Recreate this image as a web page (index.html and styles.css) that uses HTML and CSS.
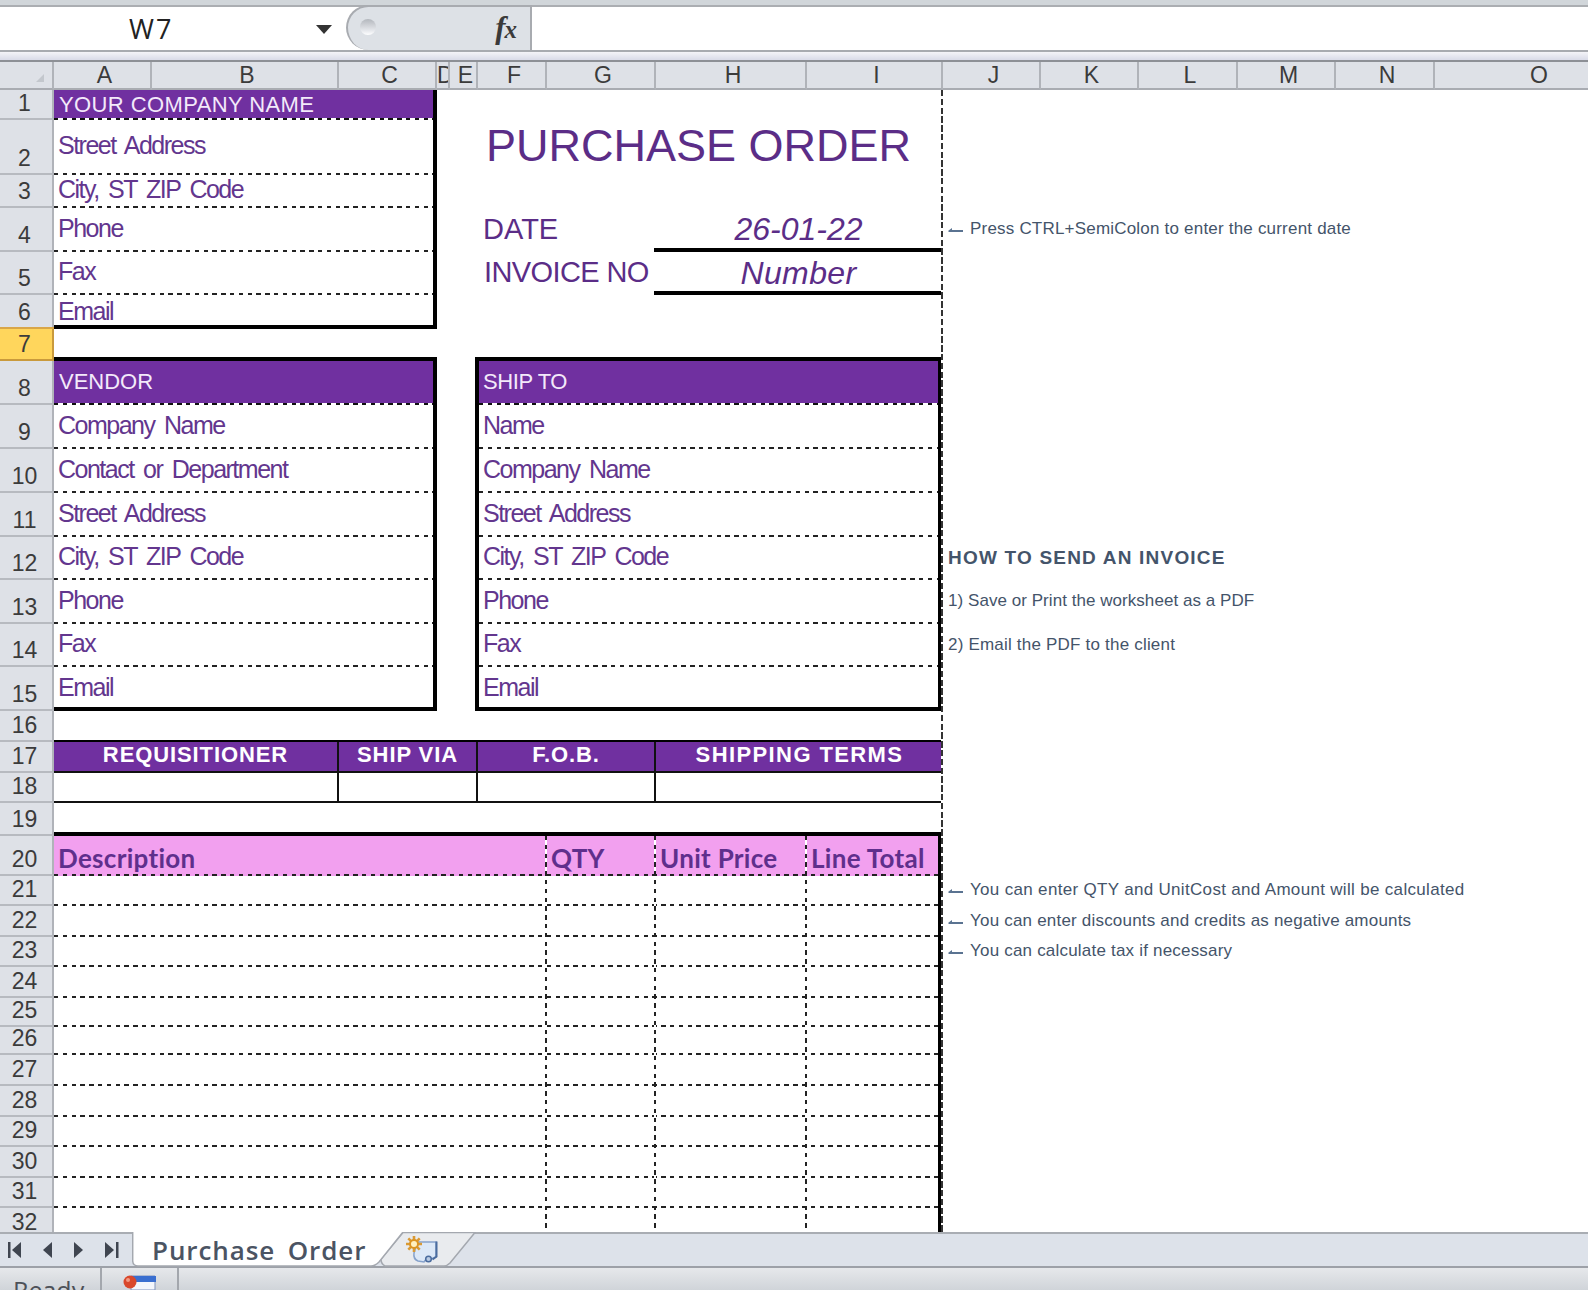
FILE: index.html
```html
<!DOCTYPE html>
<html lang="en">
<head>
    <meta charset="UTF-8">
    <meta name="viewport" content="width=device-width, initial-scale=1.0">
    <title>Purchase Order</title>
    <link rel="stylesheet" href="styles.css">
</head>
<body>
    <div class="formula-bar">
        <div class="name-box">
            <span class="cell-name">W7</span>
            <svg class="arrow" width="16" height="9" viewBox="0 0 16 9"><path d="M0 0h16L8 9z" fill="#333"/></svg>
        </div>
        <div class="fx-box">
            <span class="knob"></span>
            <span class="fx">f<small>x</small></span>
        </div>
        <div class="formula-input"></div>
    </div>
    <div class="divider"></div>

    <div class="sheet">
        <div class="col-head corner"><svg width="8" height="8" viewBox="0 0 8 8"><path d="M8 0v8H0z" fill="#c3c7cd"/></svg></div>
        <div class="col-head">A</div>
        <div class="col-head">B</div>
        <div class="col-head">C</div>
        <div class="col-head narrow">D</div>
        <div class="col-head">E</div>
        <div class="col-head">F</div>
        <div class="col-head">G</div>
        <div class="col-head">H</div>
        <div class="col-head">I</div>
        <div class="col-head">J</div>
        <div class="col-head">K</div>
        <div class="col-head">L</div>
        <div class="col-head">M</div>
        <div class="col-head">N</div>
        <div class="col-head last-col">O</div>

        <div class="row-heads">
            <div>1</div>
            <div>2</div>
            <div>3</div>
            <div>4</div>
            <div>5</div>
            <div>6</div>
            <div class="selected">7</div>
            <div>8</div>
            <div>9</div>
            <div>10</div>
            <div>11</div>
            <div>12</div>
            <div>13</div>
            <div>14</div>
            <div>15</div>
            <div>16</div>
            <div>17</div>
            <div>18</div>
            <div>19</div>
            <div>20</div>
            <div>21</div>
            <div>22</div>
            <div>23</div>
            <div>24</div>
            <div>25</div>
            <div>26</div>
            <div>27</div>
            <div>28</div>
            <div>29</div>
            <div>30</div>
            <div>31</div>
            <div>32</div>
        </div>

        <div class="block company">
            <div class="title wide">YOUR COMPANY NAME</div>
            <div>Street Address</div>
            <div>City, ST ZIP Code</div>
            <div>Phone</div>
            <div>Fax</div>
            <div class="low">Email</div>
        </div>

        <div class="heading">PURCHASE ORDER</div>
        <div class="label date-label">DATE</div>
        <div class="value date-value">26-01-22</div>
        <div class="label no-label">INVOICE NO</div>
        <div class="value no-value">Number</div>

        <div class="block vendor">
            <div class="title">VENDOR</div>
            <div>Company Name</div>
            <div>Contact or Department</div>
            <div>Street Address</div>
            <div>City, ST ZIP Code</div>
            <div>Phone</div>
            <div>Fax</div>
            <div>Email</div>
        </div>

        <div class="block ship-to">
            <div class="title tight">SHIP TO</div>
            <div>Name</div>
            <div>Company Name</div>
            <div>Street Address</div>
            <div>City, ST ZIP Code</div>
            <div>Phone</div>
            <div>Fax</div>
            <div>Email</div>
        </div>

        <div class="terms">
            <div class="th req">REQUISITIONER</div>
            <div class="th via">SHIP VIA</div>
            <div class="th fob">F.O.B.</div>
            <div class="th ship">SHIPPING TERMS</div>
            <div class="td req"></div>
            <div class="td via"></div>
            <div class="td fob"></div>
            <div class="td ship"></div>
        </div>

        <div class="items">
            <div class="item-head">
                <div class="desc">Description</div>
                <div>QTY</div>
                <div>Unit Price</div>
                <div>Line Total</div>
            </div>
            <div class="item-rows">
                <div class="item"></div>
                <div class="item"></div>
                <div class="item"></div>
                <div class="item"></div>
                <div class="item"></div>
                <div class="item"></div>
                <div class="item"></div>
                <div class="item"></div>
                <div class="item"></div>
                <div class="item"></div>
                <div class="item"></div>
            </div>
            <div class="rule rule-desc"></div>
            <div class="rule rule-qty"></div>
            <div class="rule rule-price"></div>
        </div>

        <div class="page-break"></div>

        <div class="note row4"><svg class="tip" width="15" height="6" viewBox="0 0 15 6"><path d="M0 4L4 1V3H15V5H1z" fill="#5a7391"/></svg><span class="n1">Press CTRL+SemiColon to enter the current date</span></div>
        <div class="note-title">HOW TO SEND AN INVOICE</div>
        <div class="note row13"><span class="n2">1) Save or Print the worksheet as a PDF</span></div>
        <div class="note row14"><span class="n3">2) Email the PDF to the client</span></div>
        <div class="note row21"><svg class="tip" width="15" height="6" viewBox="0 0 15 6"><path d="M0 4L4 1V3H15V5H1z" fill="#5a7391"/></svg><span class="n4">You can enter QTY and UnitCost and Amount will be calculated</span></div>
        <div class="note row22"><svg class="tip" width="15" height="6" viewBox="0 0 15 6"><path d="M0 4L4 1V3H15V5H1z" fill="#5a7391"/></svg><span class="n5">You can enter discounts and credits as negative amounts</span></div>
        <div class="note row23"><svg class="tip" width="15" height="6" viewBox="0 0 15 6"><path d="M0 4L4 1V3H15V5H1z" fill="#5a7391"/></svg><span class="n6">You can calculate tax if necessary</span></div>
    </div>

    <div class="tab-bar">
        <div class="nav">
            <svg width="132" height="34" viewBox="0 0 132 34" fill="#3f4550">
                <path d="M8 8h2.500v16H8zM21 8v16L12 16z"/>
                <path d="M52 8v16L43 16z"/>
                <path d="M74 8v16L83 16z"/>
                <path d="M105 8v16L114 16zM116 8h2.500v16H116z"/>
            </svg>
        </div>
        <div class="tab">
            <svg class="tab-shape" width="350" height="36" viewBox="0 0 350 36">
                <path d="M271 0.500H343L318 31q-3 3-6 3H253q-4-2-4-7z" fill="#e9ebee" stroke="#a4a8af" stroke-width="1.500"/>
                <path d="M0.700 0H271L247 30q-4 4-8 4H6q-5 0-5.300-5z" fill="#fff"/>
                <path d="M0.700 0V29q.3 5 5.300 5H239q4 0 8-4L271 0" fill="none" stroke="#a4a8af" stroke-width="1.500"/>
                <!-- insert sheet icon -->
                <path d="M285 10h19v15l-5 2q-5-1-7 3l-6-1q-5-2-4-8z" fill="#dce8f7" stroke="#86a2cb" stroke-width="1.500"/>
                <path d="M304.500 9.500v15l-4 3" fill="none" stroke="#4b6c9e" stroke-width="2"/>
                <circle cx="296.500" cy="27" r="2.800" fill="#b9cbe4" stroke="#4b6c9e" stroke-width="1.500"/>
                <path d="M282 4v16M274 12h16M276.300 6.300l11.400 11.400M287.700 6.300L276.300 17.700" stroke="#d99a35" stroke-width="2.600"/>
                <circle cx="282" cy="12" r="4" fill="#fff0c0" stroke="#dc9422" stroke-width="2"/>
            </svg>
            <span class="tab-name">Purchase Order</span>
        </div>
    </div>
    <div class="status-bar">
        <span class="ready">Ready</span>
        <div class="macro">
            <svg width="34" height="22" viewBox="0 0 34 22">
                <path d="M8 8h24v14H8z" fill="#f3f6fc" stroke="#7f93bd"/>
                <path d="M8 8h25v6H8z" fill="#3a6fd0"/>
                <circle cx="7" cy="14" r="6.500" fill="#d9482c"/>
                <circle cx="5" cy="12" r="2" fill="#f29a83"/>
            </svg>
        </div>
    </div>
</body>
</html>
```

FILE: styles.css
```css
* {
    box-sizing: border-box;
}
body {
    margin: 0;
    width: 1588px;
    height: 1290px;
    overflow: hidden;
    display: flex;
    flex-direction: column;
    background-color: #fff;
    font-family: "Liberation Sans", Arial, sans-serif;
}

/* formula bar */
.formula-bar {
    display: flex;
    height: 52px;
    flex: none;
    border-top: 5px solid #d1d6da;
    border-bottom: 2px solid #a8abb0;
    box-shadow: inset 0 2px 0 #abaeb2;
}
.name-box {
    width: 346px;
    display: flex;
    align-items: center;
    padding: 2px 14px 0 129px;
    justify-content: space-between;
}
.cell-name {
    font-family: "Open Sans", sans-serif;
    font-size: 27px;
    letter-spacing: 2px;
    color: #222;
}
.arrow {
    margin-top: 2px;
}
.fx-box {
    width: 186px;
    display: flex;
    justify-content: space-between;
    padding: 0 14px 0 12px;
    background-color: #dde1e6;
    border: 2px solid #a8abb0;
    border-bottom: none;
    border-radius: 24px 0 0 24px;
}
.knob {
    width: 16px;
    height: 16px;
    margin-top: 12px;
    border-radius: 50%;
    background: linear-gradient(#b3b7bd, #e8eaee 75%, #fff);
}
.fx {
    font-family: "Liberation Serif", serif;
    font-style: italic;
    font-weight: bold;
    font-size: 31px;
    line-height: 41px;
    letter-spacing: -1px;
    color: #3a3a3a;
}
.fx small {
    font-size: 25px;
}
.divider {
    flex: none;
    height: 10px;
    background: linear-gradient(#f4f4f8, #d9dbe8);
    border-bottom: 2px solid #8d9096;
}

/* worksheet */
.sheet {
    flex: none;
    height: 1170px;
    overflow: hidden;
    display: grid;
    grid-template-columns: 54px 98px 187px 98px 13px 28px 69px 109px 151px 136px 98px 98px 99px 98px 99px 210px;
    grid-template-rows: 28px 30px 55px 33px 44px 43px 34px 32px 44px 44px 44px 44px 43px 44px 43px 44px 31px 31px 30px 33px 40px 30px 31px 30px 31px 29px 28px 31px 31px 30px 31px 30px 31px;
}
.col-head {
    grid-row: 1;
    display: flex;
    justify-content: center;
    align-items: center;
    overflow: hidden;
    padding-left: 5px;
    font-size: 23px;
    color: #3b3b3b;
    background-color: #dee1e7;
    border-right: 2px solid #b0b3b9;
    border-bottom: 2px solid #a9acb2;
}
.narrow {
    justify-content: flex-start;
    padding-left: 0;
}
.last-col {
    padding-left: 0;
}
.corner {
    justify-content: flex-end;
    align-items: flex-end;
    padding: 0 8px 6px 0;
}
.row-heads {
    grid-column: 1;
    grid-row: 2 / 34;
    display: grid;
    grid-template-rows: subgrid;
}
.row-heads div {
    display: flex;
    align-items: flex-end;
    justify-content: center;
    padding: 0 3px 3px 0;
    line-height: 24px;
    font-size: 23px;
    color: #3b3b3b;
    background-color: #dee1e7;
    border-right: 2px solid #b0b3b9;
    border-bottom: 2px solid #b7bac0;
}
.row-heads .selected {
    background-color: #ffd65c;
    border-color: #c99a3c;
    box-shadow: 0 -2px 0 #d9a648;
}

/* address blocks */
.block {
    display: grid;
    grid-template-rows: subgrid;
    border: 0 solid #000;
    border-right-width: 4px;
    border-bottom-width: 4px;
}
.block div {
    display: flex;
    align-items: center;
    padding: 0 0 4px 4px;
    font-size: 25px;
    letter-spacing: -1.5px;
    word-spacing: 4px;
    white-space: nowrap;
    color: #63368e;
    background: repeating-linear-gradient(90deg, #222 0 4.4px, transparent 4.4px 8.8px) 0 100% / 100% 2px no-repeat;
}
.block div:last-child {
    padding-bottom: 0;
    background: none;
}
.block .low {
    padding-top: 2px;
}
.block .title {
    padding-left: 5px;
    padding-bottom: 2px;
    font-size: 22px;
    letter-spacing: 0;
    word-spacing: 0;
    color: #f3e9fa;
    background: repeating-linear-gradient(90deg, #111 0 4.4px, #fff 4.4px 8.8px) 0 100% / 100% 2px no-repeat #7030a0;
}
.block .wide {
    letter-spacing: 0.4px;
    padding-bottom: 0;
}
.block .tight {
    padding-left: 4px;
    letter-spacing: -0.4px;
}
.company {
    grid-column: 2 / 5;
    grid-row: 2 / 8;
}
.vendor {
    grid-column: 2 / 5;
    grid-row: 9 / 17;
    margin-top: -4px;
    border-top-width: 4px;
}
.ship-to {
    grid-column: 7 / 11;
    grid-row: 9 / 17;
    margin: -4px 2px 0 -3px;
    border-top-width: 4px;
    border-left-width: 4px;
    border-right-width: 3px;
}

/* heading */
.heading,
.label,
.value {
    display: flex;
    align-items: center;
    white-space: nowrap;
    color: #5b2d87;
}
.heading {
    grid-column: 7 / 11;
    grid-row: 3;
    padding: 0 0 3px 8px;
    font-size: 45px;
}
.label {
    grid-column: 7 / 9;
    padding: 0 0 2px 5px;
    font-size: 29px;
}
.value {
    grid-column: 9 / 11;
    justify-content: center;
    padding-top: 2px;
    font-size: 32px;
    font-style: italic;
    border-bottom: 4px solid #000;
    margin-left: -2px;
}
.date-label,
.date-value {
    grid-row: 5;
}
.no-label,
.no-value {
    grid-row: 6;
}
.no-value {
    padding-top: 4px;
    letter-spacing: 0.4px;
}
.no-label {
    letter-spacing: -0.6px;
    padding-left: 6px;
}

/* shipping terms */
.terms {
    grid-column: 2 / 11;
    grid-row: 18 / 20;
    display: grid;
    grid-template-columns: subgrid;
    grid-template-rows: subgrid;
    margin-top: -2px;
    border-top: 2px solid #000;
}
.th,
.td {
    border-right: 2px solid #111;
    border-bottom: 2px solid #111;
}
.th {
    display: flex;
    align-items: center;
    justify-content: center;
    padding-bottom: 4px;
    font-size: 22px;
    font-weight: bold;
    letter-spacing: 0.9px;
    color: #fff;
    background-color: #7030a0;
}
.req {
    grid-column: 1 / 3;
}
.via {
    grid-column: 3 / 6;
}
.fob {
    grid-column: 6 / 8;
}
.ship {
    grid-column: 8 / 10;
    border-right: none;
    letter-spacing: 1.4px;
}

/* line items */
.items {
    grid-column: 2 / 11;
    grid-row: 21 / 34;
    display: grid;
    grid-template-columns: subgrid;
    grid-template-rows: subgrid;
    margin: -4px 2px 0 0;
    border-top: 4px solid #000;
    border-right: 3px solid #000;
}
.item-head,
.item {
    background: repeating-linear-gradient(90deg, #222 0 4.4px, transparent 4.4px 8.8px) 0 100% / 100% 2px no-repeat;
}
.item-head {
    grid-column: 1 / -1;
    grid-row: 1;
    display: grid;
    grid-template-columns: subgrid;
    background-color: #f2a0ef;
    font-family: Lato, sans-serif;
    font-size: 26px;
    font-weight: bold;
    letter-spacing: 0.3px;
    color: #5f2f8c;
}
.item-head div {
    display: flex;
    align-items: center;
    padding: 3px 0 0 4px;
    white-space: nowrap;
}
.item-head .desc {
    grid-column: 1 / 7;
}
.item-rows {
    grid-column: 1 / -1;
    grid-row: 2 / -1;
    display: grid;
    grid-template-rows: subgrid;
}
.rule {
    grid-row: 1 / -1;
    background: repeating-linear-gradient(#222 0 4.4px, #fff 4.4px 8.8px) 100% 0 / 2px 100% no-repeat;
}
.rule-desc {
    grid-column: 1 / 7;
}
.rule-qty {
    grid-column: 7;
}
.rule-price {
    grid-column: 8;
}

.page-break {
    grid-column: 10;
    grid-row: 2 / 34;
    background: repeating-linear-gradient(#333 0 6.4px, #fff 6.4px 8.8px) 100% 0 / 2px 100% no-repeat;
}

/* side notes */
.note,
.note-title {
    grid-column: 11 / 17;
    display: flex;
    align-items: center;
    padding: 0 0 2px 5px;
    white-space: nowrap;
    color: #44546a;
}
.note {
    font-size: 17px;
    letter-spacing: 0.2px;
}
.note-title {
    grid-row: 13;
    font-size: 19px;
    font-weight: bold;
    letter-spacing: 1.2px;
}
.n2 {
    letter-spacing: 0.05px;
}
.n4 {
    letter-spacing: 0.32px;
}
.tip {
    margin: 2px 7px 0 0;
}
.row4 {
    grid-row: 5;
}
.row13 {
    grid-row: 14;
}
.row14 {
    grid-row: 15;
}
.row21 {
    grid-row: 22;
}
.row22 {
    grid-row: 23;
}
.row23 {
    grid-row: 24;
}

/* sheet tabs */
.tab-bar {
    flex: none;
    display: flex;
    height: 36px;
    background-color: #dde2ea;
    border-top: 2px solid #a9adb3;
    border-bottom: 2px solid #9da1a8;
}
.nav {
    width: 132px;
}
.tab {
    position: relative;
    width: 350px;
    margin-top: -2px;
}
.tab-shape {
    display: block;
}
.tab-name {
    position: absolute;
    left: 20px;
    top: 1px;
    font-family: "Open Sans", sans-serif;
    font-size: 26px;
    font-weight: 600;
    line-height: 35px;
    letter-spacing: 0.9px;
    word-spacing: 5px;
    white-space: nowrap;
    color: #4b5463;
}
.status-bar {
    display: flex;
    flex: none;
    height: 22px;
    overflow: hidden;
    background: linear-gradient(#e6e8eb, #d0d4d9);
}
.ready {
    width: 102px;
    padding: 8px 0 0 13px;
    font-family: "Open Sans", sans-serif;
    font-size: 25px;
    line-height: 28px;
    color: #4d5158;
    border-right: 2px solid #a3a7ad;
}
.macro {
    width: 77px;
    padding-left: 21px;
    border-right: 2px solid #a3a7ad;
}
```
